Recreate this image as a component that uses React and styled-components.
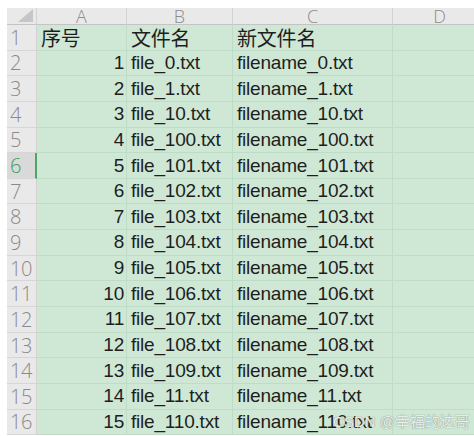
import React from "react";
import styled, { createGlobalStyle } from "styled-components";

const Global = createGlobalStyle`
  html, body { margin: 0; padding: 0; background: #ffffff; }
  body { font-family: "Liberation Sans", "Noto Sans CJK SC", sans-serif; overflow: hidden; }
`;

const Page = styled.div`
  width: 474px;
  height: 436px;
  padding: 8px 0 0 7px;
  box-sizing: border-box;
  position: relative;
  overflow: hidden;
`;

const Sheet = styled.div`
  display: grid;
  grid-template-columns: 30px 90px 106px 160px 94px;
  grid-template-rows: 17px repeat(16, 25.65px);
`;

const Corner = styled.div`
  background: #e9e9e9;
  border-right: 1px solid #d2d2d2;
  border-bottom: 1px solid #c4c4c4;
  box-sizing: border-box;
  display: flex;
  align-items: flex-end;
  justify-content: flex-end;
  padding: 0 3px 2px 0;
`;

const ColHead = styled.div`
  background: #e9e9e9;
  border-right: 1px solid #d2d2d2;
  border-bottom: 1px solid #c4c4c4;
  box-sizing: border-box;
  color: #8c8c8c;
  font-size: 18px;
  line-height: 16px;
  text-align: center;
  font-family: "Open Sans", "Liberation Sans", sans-serif;
  font-weight: 300;
`;

const RowHead = styled.div`
  background: ${(p) => (p.$active ? "#d9d9d9" : "#e9e9e9")};
  border-bottom: 1px solid #d6d6d6;
  border-right: ${(p) => (p.$active ? "2px solid #4aa864" : "1px solid #d2d2d2")};
  box-sizing: border-box;
  color: ${(p) => (p.$active ? "#3f9d5a" : "#8a8a8a")};
  font-size: 20px;
  display: flex;
  align-items: center;
  padding-left: 3px;
  font-family: "Open Sans", "Liberation Sans", sans-serif;
  font-weight: 300;
  letter-spacing: -0.5px;
`;

const Cell = styled.div`
  background: #cfe8d5;
  border-right: 1px solid #bfdcc7;
  border-bottom: 1px solid #bfdcc7;
  box-sizing: border-box;
  color: #1e1e1e;
  font-size: ${(p) => (p.$cjk ? "20px" : "19px")};
  display: flex;
  align-items: center;
  justify-content: ${(p) => (p.$right ? "flex-end" : "flex-start")};
  padding: ${(p) => (p.$right ? "0 2px 0 0" : "0 0 0 4px")};
  white-space: nowrap;
  letter-spacing: -0.2px;
`;

const Watermark = styled.div`
  position: absolute;
  right: 4px;
  bottom: 5px;
  font-size: 15px;
  color: rgba(245, 250, 246, 0.9);
  text-shadow: 0 0 1px #8a958c, 0 0 1px #8a958c;
  font-family: "Liberation Sans", "Noto Sans CJK SC", sans-serif;
`;

const files = ["0", "1", "10", "100", "101", "102", "103", "104", "105", "106", "107", "108", "109", "11", "110"];

export default function App() {
  return (
    <Page>
      <Global />
      <Sheet>
        <Corner>
          <svg width="15" height="13" viewBox="0 0 15 13">
            <polygon points="15,0 15,13 0,13" fill="#c6c6c6" />
          </svg>
        </Corner>
        <ColHead>A</ColHead>
        <ColHead>B</ColHead>
        <ColHead>C</ColHead>
        <ColHead>D</ColHead>

        <RowHead>1</RowHead>
        <Cell $cjk>序号</Cell>
        <Cell $cjk>文件名</Cell>
        <Cell $cjk>新文件名</Cell>
        <Cell />

        {files.map((f, i) => (
          <React.Fragment key={f}>
            <RowHead $active={i + 2 === 6}>{i + 2}</RowHead>
            <Cell $right>{i + 1}</Cell>
            <Cell>{`file_${f}.txt`}</Cell>
            <Cell>{`filename_${f}.txt`}</Cell>
            <Cell />
          </React.Fragment>
        ))}
      </Sheet>
      <Watermark>CSDN @幸福的达哥</Watermark>
    </Page>
  );
}
